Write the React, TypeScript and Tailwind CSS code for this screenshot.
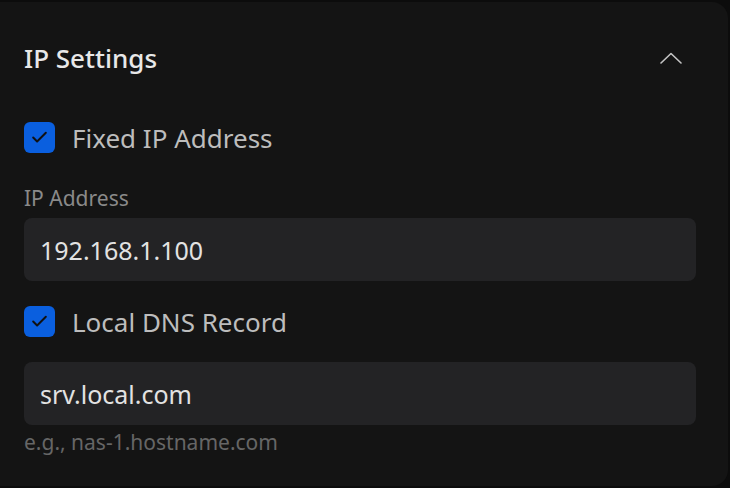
import { Check } from "lucide-react";

function CheckRow({ label }: { label: string }) {
  return (
    <label className="flex h-[31px] items-center gap-[17px]">
      <span className="flex h-[31px] w-[31px] shrink-0 items-center justify-center rounded-[6px] bg-[#0a5fdf]">
        <Check className="h-[19px] w-[19px] text-[#111]" strokeWidth={2.5} />
      </span>
      <span className="text-[26px] leading-[32px] text-[#bdbdbd]">{label}</span>
    </label>
  );
}

function TextField({ value }: { value: string }) {
  return (
    <div className="flex h-[63px] items-center rounded-[8px] bg-[#232325] px-4">
      <span className="text-[25px] leading-[32px] text-[#e2e2e2]">{value}</span>
    </div>
  );
}

export default function App() {
  return (
    <div className="h-[488px] w-[730px] overflow-hidden bg-[#0c0c0c] pr-[2px] pt-[2px] font-['Noto_Sans',sans-serif]">
      <section className="h-[484px] rounded-r-2xl bg-[#141414] pl-6 pr-[32px] pt-[40px]">
        {/* Header */}
        <div className="flex h-8 items-center justify-between">
          <h2 className="text-[26px] font-medium leading-[32px] text-[#e8e8e8]">IP Settings</h2>
          <svg className="mr-[14px] h-[12px] w-[22px] text-[#c4c4c4]" viewBox="0 0 22 12" fill="none">
            <path d="M1 11L11 1.5L21 11" stroke="currentColor" strokeWidth={1.6} strokeLinecap="round" strokeLinejoin="round" />
          </svg>
        </div>

        <div className="mt-[48px]">
          <CheckRow label="Fixed IP Address" />
        </div>

        <p className="mt-[31px] text-[21px] leading-[28px] text-[#8a8a8a]">IP Address</p>
        <div className="mt-[6px]">
          <TextField value="192.168.1.100" />
        </div>

        <div className="mt-[25px]">
          <CheckRow label="Local DNS Record" />
        </div>

        <div className="mt-[25px]">
          <TextField value="srv.local.com" />
        </div>
        <p className="mt-[5px] text-[21px] leading-[24px] text-[#666]">e.g., nas-1.hostname.com</p>
      </section>
    </div>
  );
}
